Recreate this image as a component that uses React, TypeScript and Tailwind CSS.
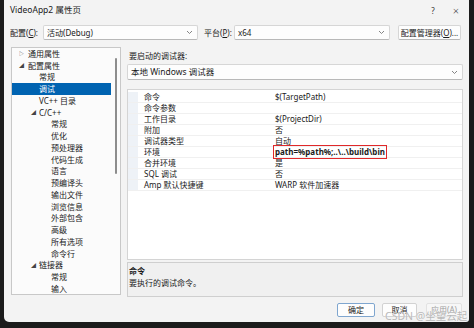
import React from "react"

type Node = { t: string; lvl: number; arrow?: "open" | "closed"; sel?: boolean }

const tree: Node[] = [
  { t: "通用属性", lvl: 0, arrow: "closed" },
  { t: "配置属性", lvl: 0, arrow: "open" },
  { t: "常规", lvl: 1 },
  { t: "调试", lvl: 1, sel: true },
  { t: "VC++ 目录", lvl: 1 },
  { t: "C/C++", lvl: 1, arrow: "open" },
  { t: "常规", lvl: 2 },
  { t: "优化", lvl: 2 },
  { t: "预处理器", lvl: 2 },
  { t: "代码生成", lvl: 2 },
  { t: "语言", lvl: 2 },
  { t: "预编译头", lvl: 2 },
  { t: "输出文件", lvl: 2 },
  { t: "浏览信息", lvl: 2 },
  { t: "外部包含", lvl: 2 },
  { t: "高级", lvl: 2 },
  { t: "所有选项", lvl: 2 },
  { t: "命令行", lvl: 2 },
  { t: "链接器", lvl: 1, arrow: "open" },
  { t: "常规", lvl: 2 },
  { t: "输入", lvl: 2 },
]

const props: [string, string][] = [
  ["命令", "$(TargetPath)"],
  ["命令参数", ""],
  ["工作目录", "$(ProjectDir)"],
  ["附加", "否"],
  ["调试器类型", "自动"],
  ["环境", "path=%path%;..\\..\\build\\bin"],
  ["合并环境", "是"],
  ["SQL 调试", "否"],
  ["Amp 默认快捷键", "WARP 软件加速器"],
]

const indent = ["pl-[16px]", "pl-[27px]", "pl-[39px]"]
const arrowPos = ["left-[7px]", "left-[19px]", "left-[31px]"]

function Chevron() {
  return (
    <svg width="7" height="5" viewBox="0 0 7 5" className="text-[#777]">
      <path d="M1 1l2.5 2.5L6 1" fill="none" stroke="currentColor" strokeWidth="0.9" />
    </svg>
  )
}

function Combo({ text, className }: { text: string; className: string }) {
  return (
    <div
      className={`flex items-center justify-between bg-[#fdfdfd] border border-[#d6d6d6] border-b-[#b8b8b8] rounded-[2px] pl-[3px] pr-[4px] ${className}`}
    >
      <span>{text}</span>
      <Chevron />
    </div>
  )
}

export default function App() {
  return (
    <div
      className="w-[474px] h-[328px] bg-[#1b1b1b] pl-[4px] text-[8px] leading-none text-[#1a1a1a] relative overflow-hidden"
      style={{ fontFamily: '"Noto Sans", "Noto Sans CJK SC", sans-serif' }}
    >
      <div className="w-[465px] h-[322px] bg-[#f3f3f3] rounded-bl-[5px] rounded-br-[3px] flex flex-col">
        {/* title bar */}
        <div className="h-[21px] flex items-center pl-[6px] pr-[10px] shrink-0">
          <span className="text-[8.5px]">VideoApp2 属性页</span>
          <span className="ml-auto text-[8px] text-[#333]">?</span>
          <span className="ml-[18px] text-[11px] font-light text-[#333]">×</span>
        </div>

        {/* configuration row */}
        <div className="flex items-center h-[15px] mt-[4px] pl-[6px] shrink-0">
          <span className="w-[33px]">配置(<span className="underline">C</span>):</span>
          <Combo text="活动(Debug)" className="w-[155px] h-[15px]" />
          <span className="ml-[6px] w-[30px]">平台(<span className="underline">P</span>):</span>
          <Combo text="x64" className="w-[156px] h-[15px]" />
          <div className="ml-[8px] w-[63px] h-[15px] flex items-center justify-center bg-[#fdfdfd] border border-[#d6d6d6] border-b-[#b8b8b8] rounded-[2px]">
            配置管理器(<span className="underline">O</span>)...
          </div>
        </div>

        {/* main */}
        <div className="flex mt-[7px] pl-[7px] pr-[6px] shrink-0">
          {/* tree */}
          <div className="w-[110px] h-[248px] border border-[#c8c8c8] bg-[#fbfbfb] flex overflow-hidden">
            <div className="flex-1 flex flex-col">
              {tree.map((n, i) => (
                <div
                  key={i}
                  className={`relative h-[11.75px] shrink-0 flex items-center ${indent[n.lvl]} ${
                    n.sel ? "bg-[#0063b1] text-white" : ""
                  }`}
                >
                  {n.arrow && (
                    <span className={`absolute ${arrowPos[n.lvl]} text-[5px] text-[#444]`}>
                      {n.arrow === "open" ? "◢" : "▷"}
                    </span>
                  )}
                  {n.t}
                </div>
              ))}
            </div>
            <div className="w-[9px] shrink-0 flex justify-center pt-[10px]">
              <div className="w-[2px] h-[116px] bg-[#8d8d8d] rounded-full" />
            </div>
          </div>

          {/* right panel */}
          <div className="ml-[6px] flex-1 flex flex-col">
            <div className="h-[17px] flex items-center pl-[2px]">要启动的调试器:</div>
            <Combo text="本地 Windows 调试器" className="h-[16px] text-[8.5px]" />
            <div className="mt-[9px] h-[171px] border border-[#d4d4d4] bg-white pt-[2px] flex flex-col">
              {props.map(([k, v], i) => (
                <div key={i} className="h-[11px] flex items-center shrink-0 border-b border-[#f0f0f0]">
                  <div className="w-[10px] h-full bg-[#eef2f7] shrink-0" />
                  <div className="w-[133px] pl-[6px] shrink-0">{k}</div>
                  <div className="pl-[4px]">
                    {k === "环境" ? (
                      <span className="inline-flex items-center h-[14px] -ml-[2px] px-[1px] border-[1.5px] border-[#e0282a] font-bold">
                        {v}
                      </span>
                    ) : (
                      v
                    )}
                  </div>
                </div>
              ))}
            </div>
            <div className="mt-[2px] h-[35px] border border-[#cfcfcf] bg-[#f0f0f0] pl-[1px] pt-[4px] flex flex-col gap-[4px]">
              <span className="font-bold">命令</span>
              <span>要执行的调试命令。</span>
            </div>
          </div>
        </div>

        {/* buttons */}
        <div className="flex justify-end pr-[7px] mt-[6px] gap-[7px]">
          <div className="w-[38px] h-[14px] flex items-center justify-center bg-[#fdfdfd] border border-[#7fa6cf] rounded-[2px]">
            确定
          </div>
          <div className="w-[35px] h-[14px] flex items-center justify-center bg-[#fdfdfd] border border-[#d2d2d2] rounded-[2px]">
            取消
          </div>
          <div className="ml-[2px] w-[36px] h-[14px] flex items-center justify-center bg-[#f7f7f7] border border-[#e2e2e2] rounded-[2px] text-[#a0a0a0]">
            应用(A)
          </div>
        </div>
      </div>

      {/* watermark */}
      <div className="absolute left-[385px] top-[311px] text-[10.5px] leading-none text-[#b8b8b8] [text-shadow:0_0_1px_rgba(255,255,255,0.9)]">
        CSDN @坐望云起
      </div>
    </div>
  )
}
